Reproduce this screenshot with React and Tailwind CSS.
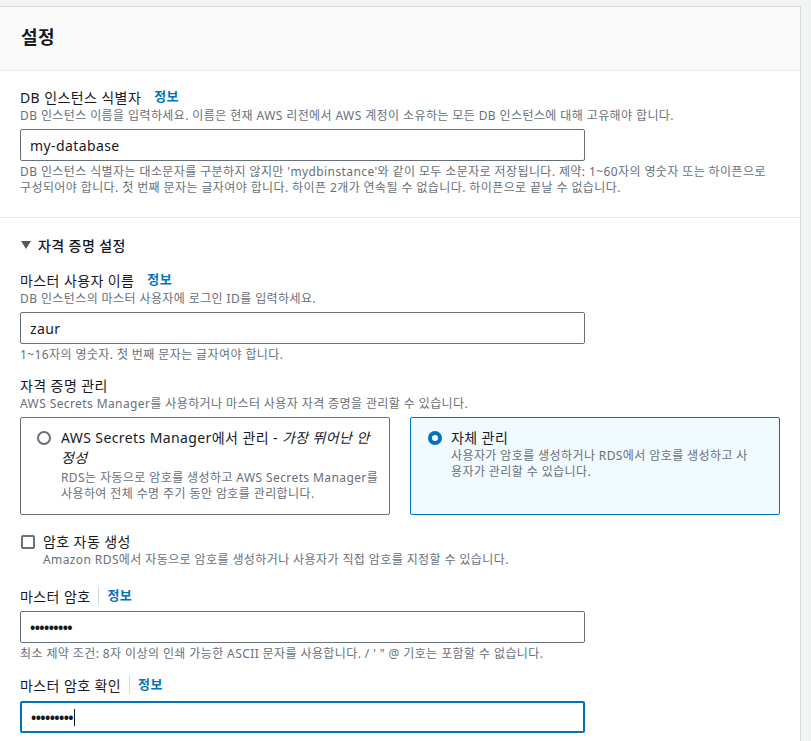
const font = { fontFamily: '"Noto Sans", "Noto Sans CJK KR", sans-serif' };

const Info = ({ sep }) => (
  <span className="flex items-center">
    {sep && <span className="mx-[8px] h-[18px] w-px bg-[#d5dbdb]" />}
    <span className={`text-[13px] font-bold text-[#0073bb] ${sep ? '' : 'ml-[13px]'}`}>정보</span>
  </span>
);

const Label = ({ children, sep, className = '' }) => (
  <div className={`flex h-[22px] items-center text-[14px] text-[#16191f] ${className}`}>
    <span>{children}</span>
    <Info sep={sep} />
  </div>
);

const Hint = ({ children, className = '' }) => (
  <p className={`text-[12px] leading-[16px] text-[#687078] ${className}`}>{children}</p>
);

const Field = ({ children, focused, className = '' }) => (
  <div
    className={`flex h-[32px] w-[565px] items-center rounded-[2px] bg-white px-[9px] text-[14px] text-[#16191f] ${
      focused ? 'border-2 border-[#0073bb] px-[8px]' : 'border border-[#687078]'
    } ${className}`}
  >
    {children}
  </div>
);

const Dots = () => <span className="text-[14px] font-bold tracking-[-0.6px]">•••••••••</span>;

export default function App() {
  return (
    <div className="min-h-[741px] bg-[#f2f3f3] pt-[6px] tracking-[0.4px]" style={font}>
      <div className="w-[801px] border-t border-r border-[#d5dbdb] bg-white pb-10">
        <div className="flex h-[64px] items-center border-b border-[#eaeded] bg-[#fafafa] px-[21px] pb-[3px]">
          <h2 className="text-[18px] font-bold text-[#16191f]">설정</h2>
        </div>

        {/* 식별자 */}
        <div className="border-b border-[#eaeded] px-[20px] pt-[15px] pb-[21px]">
          <Label>DB 인스턴스 식별자</Label>
          <Hint>DB 인스턴스 이름을 입력하세요. 이름은 현재 AWS 리전에서 AWS 계정이 소유하는 모든 DB 인스턴스에 대해 고유해야 합니다.</Hint>
          <Field className="mt-[5px]">my-database</Field>
          <Hint className="mt-[3px] w-[760px]">
            DB 인스턴스 식별자는 대소문자를 구분하지 않지만 'mydbinstance'와 같이 모두 소문자로 저장됩니다. 제약: 1~60자의 영숫자 또는 하이픈으로 구성되어야 합니다. 첫 번째 문자는 글자여야 합니다. 하이픈 2개가 연속될 수 없습니다. 하이픈으로 끝날 수 없습니다.
          </Hint>
        </div>

        {/* 자격 증명 설정 */}
        <div className="px-[20px] pt-[16px]">
          <div className="flex h-[22px] items-center gap-[7px] text-[14px] font-medium text-[#16191f]">
            <svg width="10" height="8" viewBox="0 0 10 8" className="ml-[1px]">
              <path d="M0 0h10L5 8z" fill="#545b64" />
            </svg>
            자격 증명 설정
          </div>

          <Label className="mt-[13px]">마스터 사용자 이름</Label>
          <Hint>DB 인스턴스의 마스터 사용자에 로그인 ID를 입력하세요.</Hint>
          <Field className="mt-[5px]">zaur</Field>
          <Hint className="mt-[3px]">1~16자의 영숫자. 첫 번째 문자는 글자여야 합니다.</Hint>

          <div className="mt-[11px] flex h-[22px] items-center text-[14px] text-[#16191f]">자격 증명 관리</div>
          <Hint>AWS Secrets Manager를 사용하거나 마스터 사용자 자격 증명을 관리할 수 있습니다.</Hint>

          <div className="mt-[5px] grid w-[760px] grid-cols-2 gap-[20px]">
            <div className="flex h-[98px] gap-[10px] rounded-[2px] border border-[#687078] bg-white pl-[16px] pr-[10px] pt-[10px]">
              <span className="mt-[3px] h-[14px] w-[14px] shrink-0 rounded-full border-2 border-[#687078]" />
              <div>
                <div className="pr-[6px] text-[14px] leading-[20px] text-[#16191f]">
                  AWS Secrets Manager에서 관리 - <i>가장 뛰어난 안정성</i>
                </div>
                <Hint className="mt-[2px] leading-[15px]">RDS는 자동으로 암호를 생성하고 AWS Secrets Manager를 사용하여 전체 수명 주기 동안 암호를 관리합니다.</Hint>
              </div>
            </div>
            <div className="flex h-[98px] gap-[9px] rounded-[2px] border border-[#0073bb] bg-[#f1faff] pl-[17px] pr-[24px] pt-[10px]">
              <span className="mt-[3px] h-[14px] w-[14px] shrink-0 rounded-full border-[4px] border-[#0073bb] bg-white" />
              <div>
                <div className="text-[14px] leading-[20px] text-[#16191f]">자체 관리</div>
                <Hint>사용자가 암호를 생성하거나 RDS에서 암호를 생성하고 사용자가 관리할 수 있습니다.</Hint>
              </div>
            </div>
          </div>

          <div className="mt-[17px] flex gap-[8px]">
            <span className="ml-[1px] mt-[3px] h-[14px] w-[14px] shrink-0 rounded-[2px] border-2 border-[#687078] bg-white" />
            <div>
              <div className="text-[14px] leading-[20px] text-[#16191f]">암호 자동 생성</div>
              <Hint>Amazon RDS에서 자동으로 암호를 생성하거나 사용자가 직접 암호를 지정할 수 있습니다.</Hint>
            </div>
          </div>

          <Label sep className="mt-[17px]">마스터 암호</Label>
          <Field className="mt-[4px]"><Dots /></Field>
          <Hint className="mt-[3px]">최소 제약 조건: 8자 이상의 인쇄 가능한 ASCII 문자를 사용합니다. / ' " @ 기호는 포함할 수 없습니다.</Hint>

          <Label sep className="mt-[12px]">마스터 암호 확인</Label>
          <Field focused className="mt-[5px]">
            <Dots />
            <span className="ml-px h-[17px] w-px bg-[#16191f]" />
          </Field>
        </div>
      </div>
    </div>
  );
}
